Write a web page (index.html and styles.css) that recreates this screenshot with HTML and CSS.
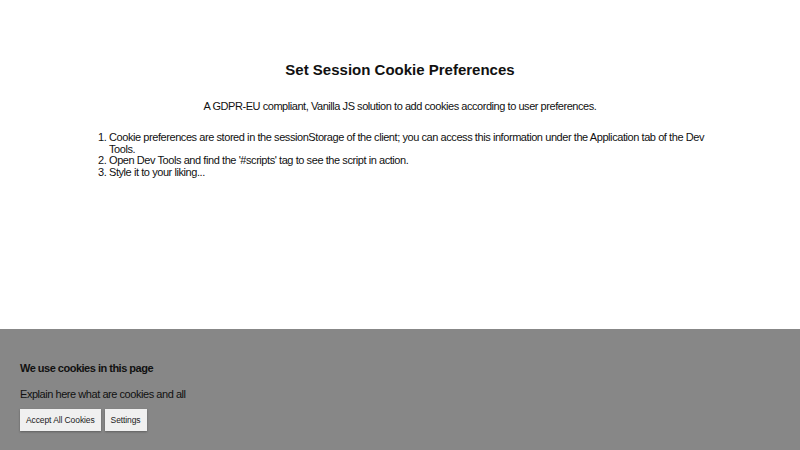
FILE: index.html
```html
<!DOCTYPE html>
<html lang="en">
<head>
    <meta charset="UTF-8">
    <meta name="viewport" content="width=device-width, initial-scale=1.0">
    <title>Session Cookies</title>
    <link rel="stylesheet" href="styles.css">
</head>
<body>
    <main class="content">
        <h1>Set Session Cookie Preferences</h1>
        <p class="intro">A GDPR-EU compliant, Vanilla JS solution to add cookies according to user preferences.</p>
        <ol class="notes">
            <li>Cookie preferences are stored in the sessionStorage of the client; you can access this information under the Application tab of the Dev Tools.</li>
            <li>Open Dev Tools and find the '#scripts' tag to see the script in action.</li>
            <li>Style it to your liking...</li>
        </ol>
    </main>

    <!-- cookie banner -->
    <div class="cookie-banner" id="cookie_banner">
        <h4>We use cookies in this page</h4>
        <p>Explain here what are cookies and all</p>
        <div class="btn-container">
            <button type="button" id="accept_all">Accept All Cookies</button>
            <button type="button" id="settings">Settings</button>
        </div>
    </div>
</body>
</html>
```

FILE: styles.css
```css
body {
    font-family: "Liberation Sans", Arial, sans-serif;
    color: #111;
    margin: 0;
    padding: 0;
    height: 450px;
    display: flex;
    flex-direction: column;
}

.content {
    flex: 1;
    padding: 61px 80px 0;
}

h1 {
    text-align: center;
    font-size: 15px;
    margin: 0 0 22px;
}

.intro {
    text-align: center;
    font-size: 11px;
    letter-spacing: -0.45px;
    margin: 0 0 20px;
}

.notes {
    font-size: 11px;
    letter-spacing: -0.43px;
    line-height: 11.5px;
    margin: 0;
    padding-left: 29px;
}

.cookie-banner {
    background-color: #878787;
    height: 121px;
    padding: 33px 20px 0;
    box-sizing: border-box;
}

.cookie-banner h4 {
    font-size: 11px;
    letter-spacing: -0.5px;
    margin: 0 0 14px;
}

.cookie-banner p {
    font-size: 11px;
    letter-spacing: -0.45px;
    margin: 0 0 9px;
}

.btn-container {
    display: flex;
    gap: 4px;
}

.btn-container button {
    font-family: "Liberation Sans", Arial, sans-serif;
    font-size: 8.5px;
    letter-spacing: -0.1px;
    background-color: #f0f0f0;
    color: #222;
    border: none;
    padding: 6px 6px;
    box-shadow: 0 1px 2px rgba(0, 0, 0, 0.3);
    cursor: pointer;
}
```
